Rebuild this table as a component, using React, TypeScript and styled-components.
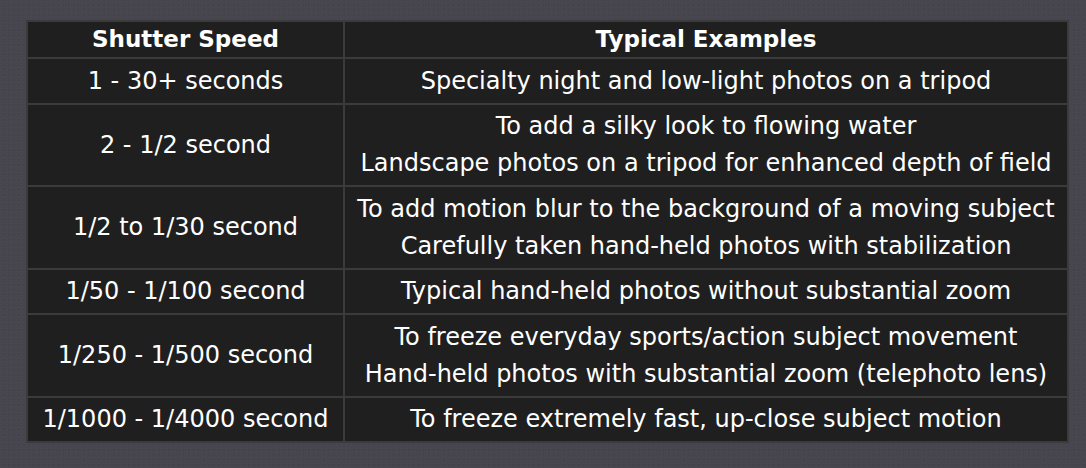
import React from 'react';
import styled, {createGlobalStyle} from 'styled-components';

const GlobalStyle = createGlobalStyle`
  html, body {
    margin: 0;
    padding: 0;
    background: #47454d;
  }
`;

interface IRow {
    speed: string;
    examples: string[];
}

const rows: IRow[] = [
    {speed: '1 - 30+ seconds', examples: ['Specialty night and low-light photos on a tripod']},
    {
        speed: '2 - 1/2 second',
        examples: ['To add a silky look to flowing water', 'Landscape photos on a tripod for enhanced depth of field']
    },
    {
        speed: '1/2 to 1/30 second',
        examples: ['To add motion blur to the background of a moving subject', 'Carefully taken hand-held photos with stabilization']
    },
    {speed: '1/50 - 1/100 second', examples: ['Typical hand-held photos without substantial zoom']},
    {
        speed: '1/250 - 1/500 second',
        examples: ['To freeze everyday sports/action subject movement', 'Hand-held photos with substantial zoom (telephoto lens)']
    },
    {speed: '1/1000 - 1/4000 second', examples: ['To freeze extremely fast, up-close subject motion']},
];

const App: React.FC = () => {
    return (
        <Page>
            <GlobalStyle/>
            <SpeedTable>
                <colgroup>
                    <col style={{width: 315}}/>
                    <col style={{width: 722}}/>
                </colgroup>
                <thead>
                <tr>
                    <HeadCell>Shutter Speed</HeadCell>
                    <HeadCell>Typical Examples</HeadCell>
                </tr>
                </thead>
                <tbody>
                {rows.map(row => (
                    <tr key={row.speed}>
                        <Cell>{row.speed}</Cell>
                        <Cell>
                            {row.examples.map(line => (
                                <Line key={line}>{line}</Line>
                            ))}
                        </Cell>
                    </tr>
                ))}
                </tbody>
            </SpeedTable>
        </Page>
    );
};

const Page = styled.div`
  width: 1086px;
  height: 468px;
  box-sizing: border-box;
  padding: 20px 0 0 26px;
  background-color: #47454d;
  background-image: radial-gradient(rgba(255, 255, 255, 0.025) 1px, transparent 1px),
  radial-gradient(rgba(0, 0, 0, 0.05) 1px, transparent 1px);
  background-size: 3px 3px, 5px 5px;
  background-position: 0 0, 1px 2px;
  font-family: "DejaVu Sans", Verdana, sans-serif;
  color: #ffffff;
`;

const SpeedTable = styled.table`
  width: 1043px;
  table-layout: fixed;
  border-collapse: separate;
  border-spacing: 2px;
  background: #3b3b3b;
`;

const HeadCell = styled.th`
  height: 35px;
  padding: 0;
  background: #1f1f1f;
  font-size: 23px;
  font-weight: bold;
  line-height: 35px;
  text-align: center;
`;

const Cell = styled.td`
  padding: 3.5px 0 3px;
  background: #1f1f1f;
  font-size: 24px;
  line-height: 37px;
  text-align: center;
  white-space: nowrap;
`;

const Line = styled.div`
  display: block;
`;

export default App;
